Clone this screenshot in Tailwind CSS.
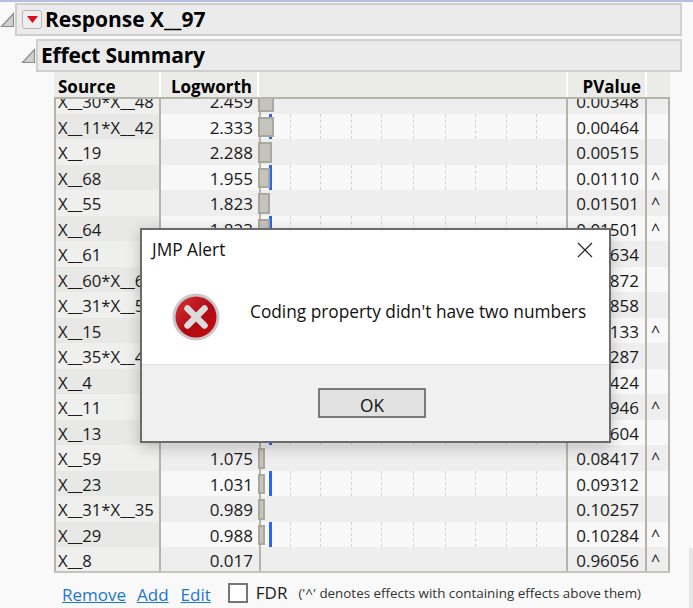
<!DOCTYPE html>
<html lang="en">
<head>
    <meta charset="UTF-8">
    <title>JMP Alert</title>
    <script src="https://cdn.jsdelivr.net/npm/@tailwindcss/browser@4"></script>
</head>
<body class="bg-[#f9f9f9]">
    <div class="relative w-[693px] h-[608px] overflow-hidden border-t-2 border-[#b6bde0] font-['Open_Sans','Noto_Sans',sans-serif] text-[#1a1a1a]">

        <!-- Response outline header -->
        <div class="flex items-center h-[33px] mt-[1px]">
            <svg class="w-[15px] h-[16px] shrink-0" viewBox="0 0 15 16"><path d="M13.5 1.5 V14.5 H1.5 Z" fill="#d0d0d0" stroke="#8c8c8c" stroke-width="1.2"/></svg>
            <div class="flex items-center w-[667px] h-[33px] bg-[#ebebeb] border-2 border-[#cfcfcf] pl-[5px] gap-[3px]">
                <div class="flex items-center justify-center w-[20px] h-[19px] bg-[#f0eeee] border border-[#b5b5b5] rounded-[3px]">
                    <svg class="w-[11px] h-[7px]" viewBox="0 0 11 7"><path d="M0 0 H11 L5.5 7 Z" fill="#d8101c"/></svg>
                </div>
                <span class="pt-[1px] text-[21px] font-bold text-black">Response X__97</span>
            </div>
        </div>

        <!-- Effect Summary outline header -->
        <div class="flex items-center h-[33px] mt-[3px] ml-[21px]">
            <svg class="w-[15px] h-[16px] shrink-0" viewBox="0 0 15 16"><path d="M13.5 1.5 V14.5 H1.5 Z" fill="#d0d0d0" stroke="#8c8c8c" stroke-width="1.2"/></svg>
            <div class="flex items-center w-[646px] h-[33px] bg-[#ebebeb] border-2 border-[#cfcfcf] pl-[3px]">
                <span class="text-[21px] font-bold text-black tracking-[-0.2px]">Effect Summary</span>
            </div>
        </div>

        <!-- Table -->
        <div class="ml-[54px] w-[616px]">
            <div class="flex h-[27px] bg-[#ebebe9] border-b-2 border-[#b4b4aa] text-[17px] font-bold text-black leading-[29px]">
                <div class="w-[107px] pl-[4px] border-r-2 border-white">Source</div>
                <div class="w-[98px] pr-[5px] text-right border-r-2 border-white">Logworth</div>
                <div class="w-[309px] border-r-2 border-white"></div>
                <div class="w-[79px] pr-[4px] text-right border-r-2 border-white">PValue</div>
                <div class="w-[23px]"></div>
            </div>
            <div class="h-[474px] overflow-hidden border-b-2 border-[#c4c4ba]">
                <div id="rows" class="-mt-[11px] text-[17px] leading-[27px]"></div>
            </div>
        </div>

        <!-- Footer links -->
        <div class="flex items-center ml-[62px] mt-[8px] h-[24px]">
            <a class="pt-[3px] text-[17px] text-[#1b76d2] underline">Remove</a>
            <a class="pt-[3px] ml-[11px] text-[17px] text-[#1b76d2] underline">Add</a>
            <a class="pt-[3px] ml-[12px] text-[17px] text-[#1b76d2] underline">Edit</a>
            <div class="ml-[17px] w-[20px] h-[20px] bg-white border-2 border-[#767676]"></div>
            <span class="ml-[8px] text-[17px]">FDR</span>
            <span class="ml-[11px] text-[13.4px] text-[#333] whitespace-nowrap">('^' denotes effects with containing effects above them)</span>
        </div>

        <!-- Scrollbar sliver -->
        <div class="absolute right-0 top-[546px] w-[4px] h-[60px] bg-[#e6e6e6]"></div>

        <!-- Alert dialog -->
        <div class="absolute left-[140px] top-[226px] w-[471px] h-[215px] flex flex-col bg-white border-2 border-[#6b6b6b] shadow-[0_4px_14px_rgba(0,0,0,0.22)]">
            <div class="flex items-center justify-between h-[40px] pl-[10px] pr-[16px] text-[17.3px] text-[#111]">
                <span>JMP Alert</span>
                <svg class="w-[16px] h-[16px]" viewBox="0 0 16 16"><path d="M1 1 L15 15 M15 1 L1 15" stroke="#222" stroke-width="1.2" fill="none"/></svg>
            </div>
            <div class="flex items-center h-[94px] pl-[30px]">
                <svg class="w-[48px] h-[48px] shrink-0" viewBox="0 0 48 48">
                    <defs>
                        <linearGradient id="redFill" x1="0" y1="0" x2="1" y2="1">
                            <stop offset="0" stop-color="#d8343c"/>
                            <stop offset="0.55" stop-color="#b00b12"/>
                            <stop offset="1" stop-color="#c9080f"/>
                        </linearGradient>
                    </defs>
                    <circle cx="24" cy="24" r="23.5" fill="#c8c8c8"/>
                    <circle cx="24" cy="24" r="20.5" fill="url(#redFill)"/>
                    <path d="M15.5 15.5 L32.5 32.5 M32.5 15.5 L15.5 32.5" stroke="#dcdcdc" stroke-width="6.5" stroke-linecap="round"/>
                </svg>
                <span class="ml-[30px] -mt-[10px] text-[17.3px] text-[#111] whitespace-nowrap">Coding property didn't have two numbers</span>
            </div>
            <div class="flex-1 flex items-start pl-[176px] pt-[23px] bg-[#f0f0f0] border-t border-[#e2e2e2]">
                <button class="w-[108px] h-[30px] pt-[3px] bg-[#e1e1e1] border-2 border-[#7a7a7a] text-[17.3px] text-[#111]">OK</button>
            </div>
        </div>
    </div>

    <script>
        const rows = [
            ['X__30*X__48', '2.459', '0.00348', '', 16],
            ['X__11*X__42', '2.333', '0.00464', '', 16],
            ['X__19', '2.288', '0.00515', '', 14],
            ['X__68', '1.955', '0.01110', '^', 12],
            ['X__55', '1.823', '0.01501', '^', 12],
            ['X__64', '1.823', '0.01501', '^', 12],
            ['X__61', '1.787', '0.01634', '', 11],
            ['X__60*X__62', '1.728', '0.01872', '', 11],
            ['X__31*X__50', '1.544', '0.02858', '', 10],
            ['X__15', '1.504', '0.03133', '^', 10],
            ['X__35*X__47', '1.483', '0.03287', '', 9],
            ['X__4', '1.465', '0.03424', '', 9],
            ['X__11', '1.306', '0.04946', '^', 8],
            ['X__13', '1.251', '0.05604', '', 8],
            ['X__59', '1.075', '0.08417', '^', 7],
            ['X__23', '1.031', '0.09312', '', 7],
            ['X__31*X__35', '0.989', '0.10257', '', 7],
            ['X__29', '0.988', '0.10284', '^', 7],
            ['X__8', '0.017', '0.96056', '^', 0],
        ];
        const gridLines = [29, 59, 90, 120, 152, 184, 214, 245, 275];

        document.getElementById('rows').innerHTML = rows.map((row, i) => {
            const even = i % 2 === 1;
            const lines = even ? gridLines.map(x =>
                `<div class="absolute top-0 bottom-0 border-l border-dashed border-[#d4d4d4]" style="left:${x}px"></div>`).join('') : '';
            const tick = even ? `<div class="absolute top-0 bottom-0 left-[8px] w-[3px] bg-[#2a66f0]"></div>` : '';
            const bar = row[4] ? `<div class="absolute top-[3px] bottom-[2px] -left-[3px] bg-[#c4c4bc] border-2 border-[#a8a89c]" style="width:${row[4]}px"></div>` : '';
            return `<div class="flex h-[25.5px] ${even ? 'bg-[#f8f8f8]' : 'bg-[#eeeeee]'}">
                <div class="w-[107px] pl-[2px] border-l-2 border-r-2 border-[#b4b4aa] whitespace-nowrap overflow-hidden text-[16.7px] ${even ? 'bg-[#e8e8e6]' : 'bg-[#efefed]'}">${row[0]}</div>
                <div class="w-[98px] pr-[6px] text-right">${row[1]}</div>
                <div class="relative w-[309px] border-l-2 border-r-2 border-[#b4b4aa]">${lines}${tick}${bar}</div>
                <div class="w-[79px] pr-[6px] text-right border-r-2 border-[#b4b4aa]">${row[2]}</div>
                <div class="w-[23px] pl-[4px] border-r-2 border-[#b4b4aa] text-[16px]">${row[3]}</div>
            </div>`;
        }).join('');
    </script>
</body>
</html>
